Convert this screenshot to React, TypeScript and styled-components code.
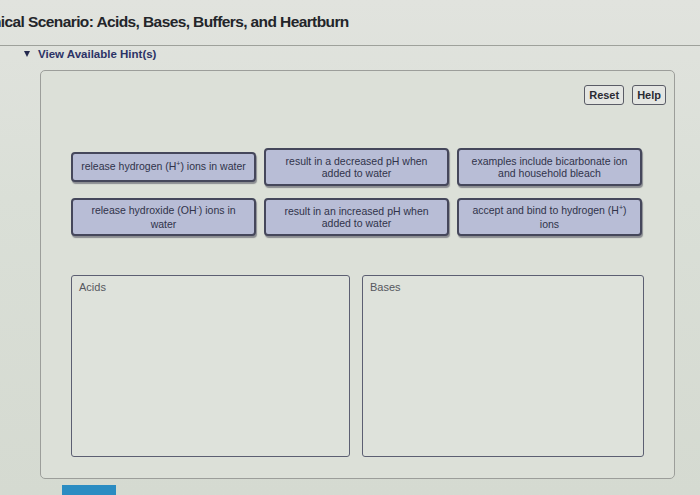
import * as React from 'react';
import styled, { createGlobalStyle } from 'styled-components';

const GlobalStyle = createGlobalStyle`
  html, body {
    margin: 0;
    padding: 0;
  }
  body {
    font-family: "Liberation Sans", Arial, sans-serif;
    background: #d9ddd5;
  }
`;

const Page = styled.div`
  width: 700px;
  height: 495px;
  overflow: hidden;
  background: linear-gradient(180deg, #e1e3de 0%, #dadfd7 40%, #d5dad1 100%);
  display: flex;
  flex-direction: column;
`;

// the course name runs past the left edge of the window
const Title = styled.h1`
  margin: 0;
  padding: 13px 0 0 0;
  margin-left: -26px;
  height: 33px;
  box-sizing: border-box;
  font-size: 15.5px;
  font-weight: bold;
  color: #23252a;
  white-space: nowrap;
  letter-spacing: -0.6px;
`;

const Rule = styled.div`
  height: 1px;
  background: #9ea19b;
  margin-top: 12px;
`;

const HintToggle = styled.div`
  display: flex;
  align-items: center;
  gap: 8px;
  padding: 0 0 0 24px;
  height: 14px;
  margin-top: 1px;
  font-size: 11.5px;
  font-weight: bold;
  color: #2c3366;
`;

const Arrow = styled.span`
  width: 0;
  height: 0;
  border-left: 3px solid transparent;
  border-right: 3px solid transparent;
  border-top: 6px solid #23284d;
`;

const Panel = styled.div`
  margin: 9px 25px 0 40px;
  height: 412px;
  box-sizing: border-box;
  border: 1px solid #9c9e9a;
  border-radius: 5px;
  padding: 14px 8px 0 30px;
  display: flex;
  flex-direction: column;
  background: #dce0d8;
`;

const Toolbar = styled.div`
  display: flex;
  justify-content: flex-end;
  gap: 8px;
`;

const ToolButton = styled.button`
  font-family: inherit;
  font-size: 11px;
  font-weight: bold;
  color: #2a2b33;
  background: #e4e6e2;
  border: 1.5px solid #5a5c66;
  border-radius: 3px;
  padding: 2px 4px;
  height: 20px;
`;

const CardGrid = styled.div`
  display: grid;
  grid-template-columns: repeat(3, 185px);
  column-gap: 8px;
  grid-auto-rows: 40px;
  row-gap: 10px;
  align-items: center;
  margin-top: 42px;
`;

const Card = styled.div<{ $single?: boolean }>`
  box-sizing: border-box;
  height: ${(p) => (p.$single ? '30px' : '38px')};
  display: flex;
  align-items: center;
  justify-content: center;
  text-align: center;
  padding: 0 3px;
  background: #b8bdd6;
  border: 2px solid #45475b;
  border-radius: 4px;
  box-shadow: 1px 2px 1px rgba(40, 40, 60, 0.45);
  font-size: 10.5px;
  line-height: 12px;
  color: #30334a;
`;

const Sup = styled.span`
  font-size: 7px;
  position: relative;
  top: -4px;
`;

const DropRow = styled.div`
  display: grid;
  grid-template-columns: 279px 282px;
  column-gap: 12px;
  margin-top: 38px;
`;

const DropZone = styled.div`
  height: 182px;
  box-sizing: border-box;
  border: 1.5px solid #5c5f72;
  border-radius: 3px;
  background: #dee2db;
  padding: 5px 7px;
  font-size: 11px;
  color: #55575e;
`;

const SubmitStub = styled.div`
  margin: 6px 0 0 62px;
  width: 54px;
  height: 10px;
  background: #2b8cc2;
`;

const cards: { text: React.ReactNode; single?: boolean }[] = [
  { text: <>release hydrogen (H<Sup>+</Sup>) ions in water</>, single: true },
  { text: <>result in a decreased pH when<br />added to water</> },
  { text: <>examples include bicarbonate ion<br />and household bleach</> },
  { text: <>release hydroxide (OH<Sup>-</Sup>) ions in<br />water</> },
  { text: <>result in an increased pH when<br />added to water</> },
  { text: <>accept and bind to hydrogen (H<Sup>+</Sup>)<br />ions</> },
];

export default function App() {
  return (
    <Page>
      <GlobalStyle />
      <Title>Clinical Scenario: Acids, Bases, Buffers, and Heartburn</Title>
      <Rule />
      <HintToggle>
        <Arrow />
        View Available Hint(s)
      </HintToggle>
      <Panel>
        <Toolbar>
          <ToolButton>Reset</ToolButton>
          <ToolButton>Help</ToolButton>
        </Toolbar>
        <CardGrid>
          {cards.map((c, i) => (
            <Card key={i} $single={c.single}>
              <span>{c.text}</span>
            </Card>
          ))}
        </CardGrid>
        <DropRow>
          <DropZone>Acids</DropZone>
          <DropZone>Bases</DropZone>
        </DropRow>
      </Panel>
      <SubmitStub />
    </Page>
  );
}
